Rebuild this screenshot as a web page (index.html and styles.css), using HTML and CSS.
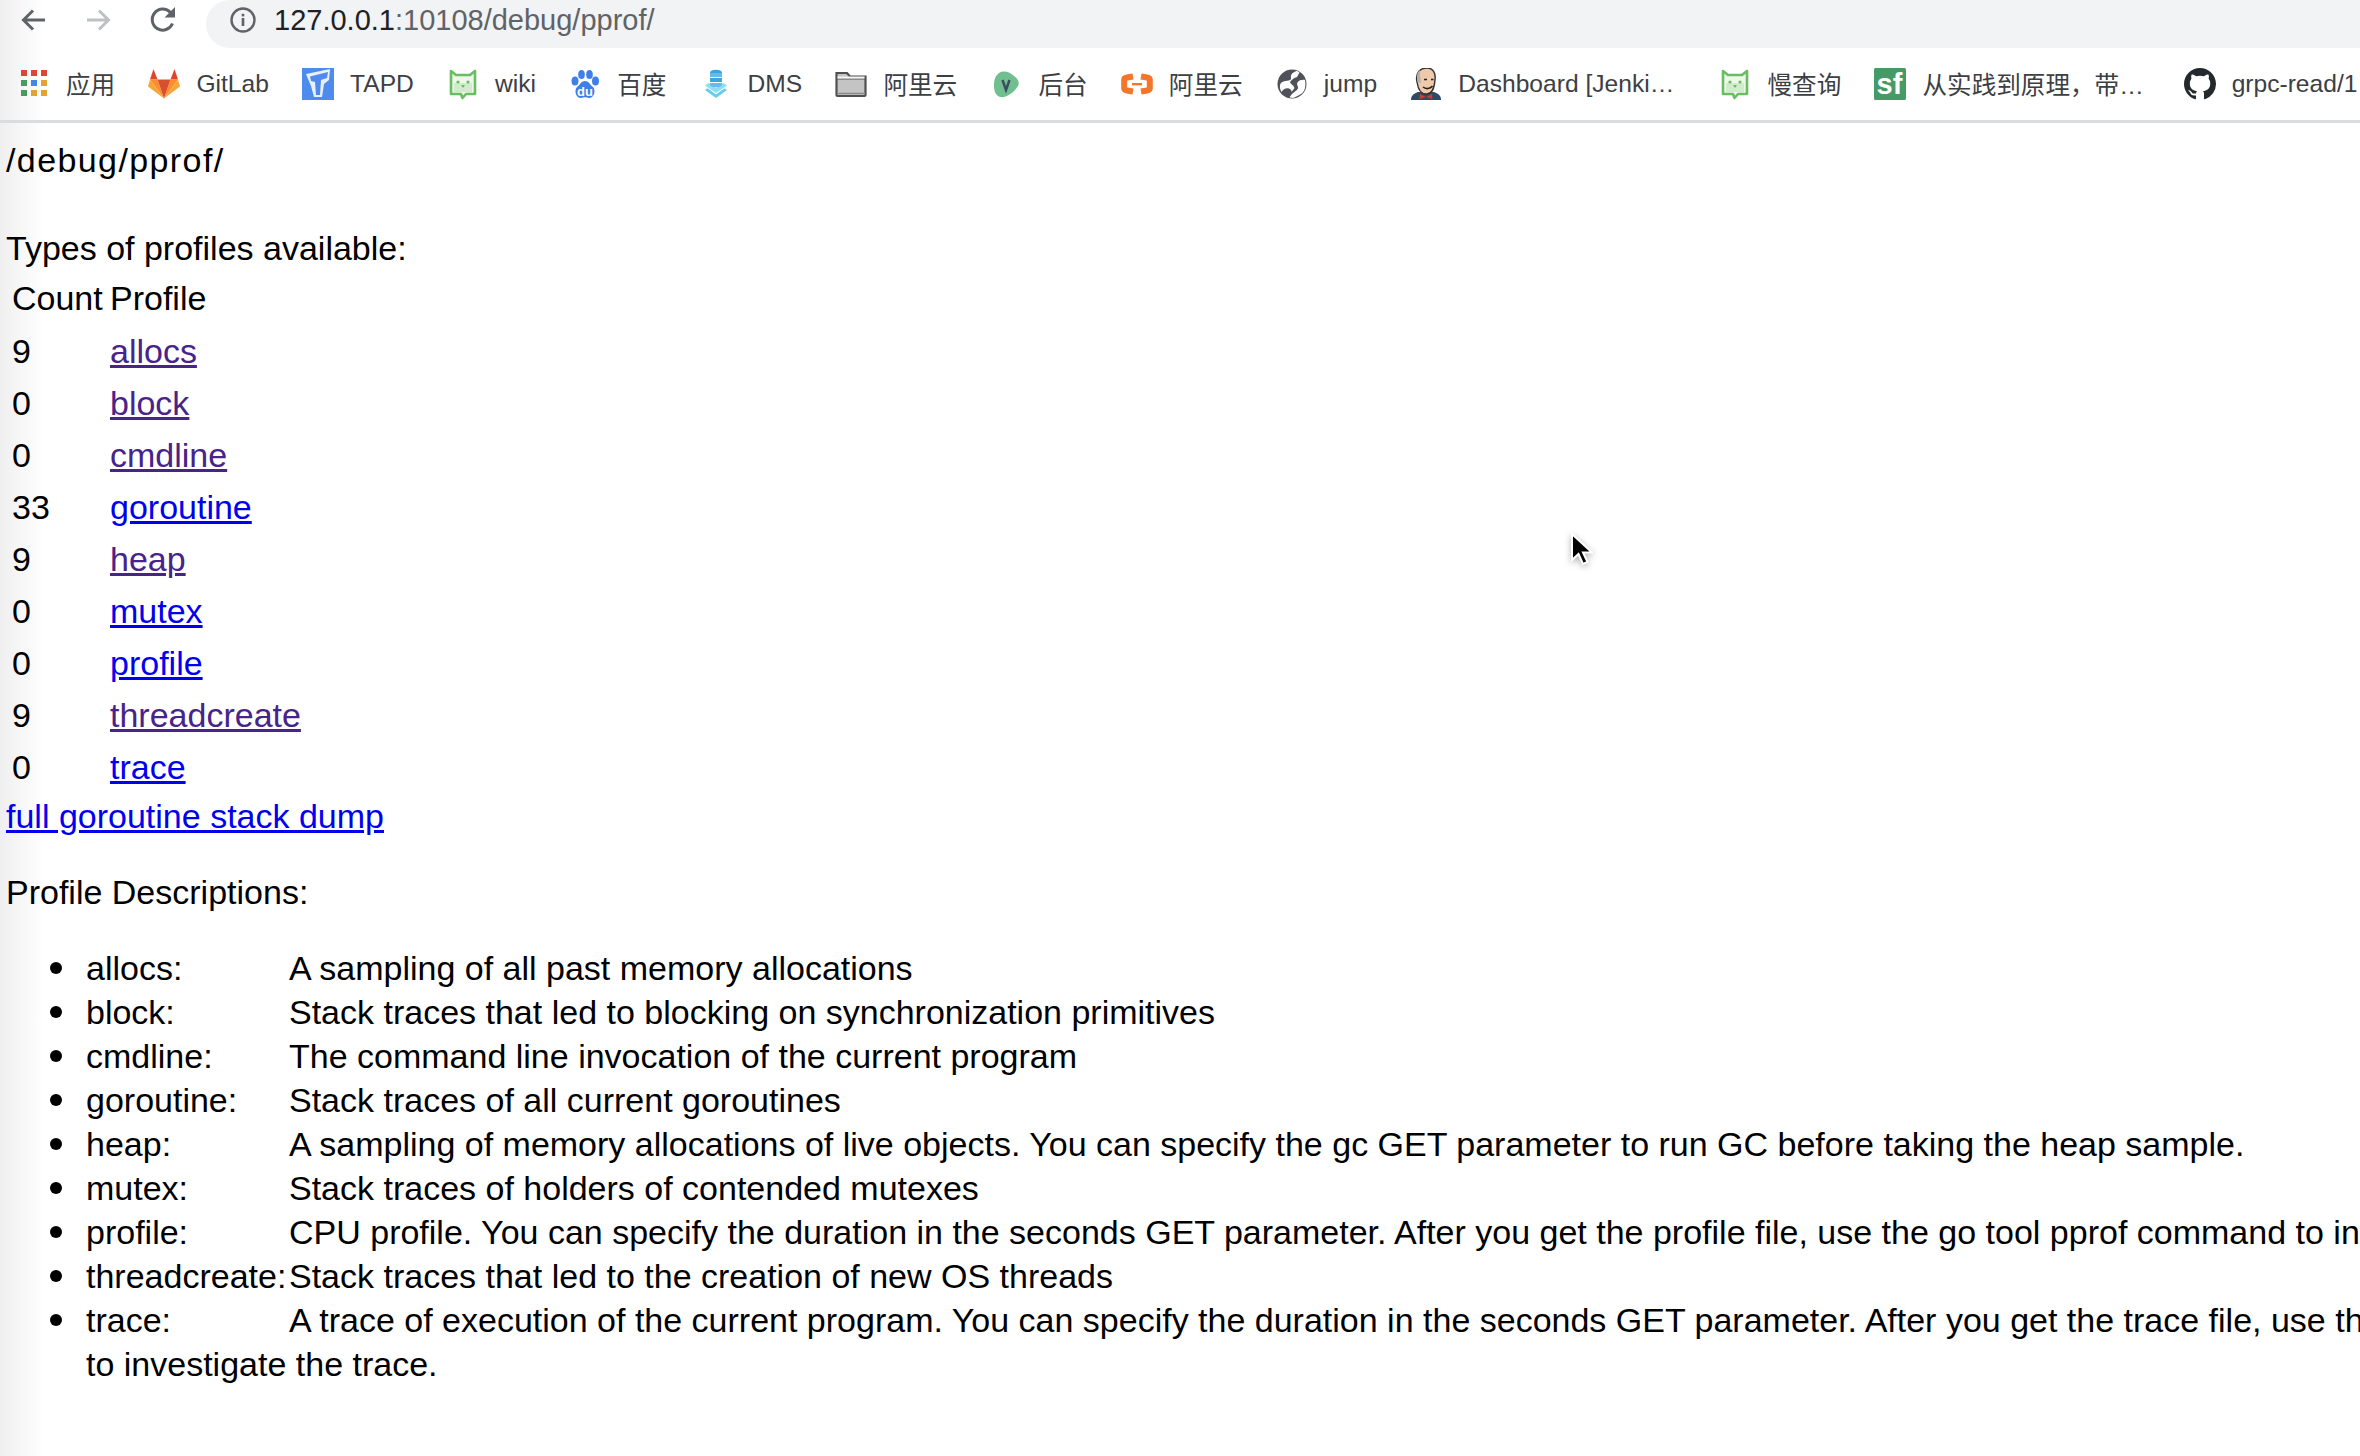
FILE: index.html
```html
<!DOCTYPE html>
<html lang="en">
<head>
    <meta charset="UTF-8">
    <title>/debug/pprof/</title>
    <link rel="stylesheet" href="styles.css">
</head>
<body>
    <div class="toolbar">
        <svg class="nav-icon" viewBox="0 0 28 28"><path d="M25 14H4M13 4.500L3.500 14 13 23.500" fill="none" stroke="#5f6368" stroke-width="3"/></svg>
        <svg class="nav-icon nav-next" viewBox="0 0 28 28"><path d="M3 14h21M15 4.500L24.500 14 15 23.500" fill="none" stroke="#bdc1c6" stroke-width="3"/></svg>
        <svg class="nav-icon nav-reload" viewBox="0 0 28 28"><path d="M23.500 17.500A10.500 10.500 0 1 1 21.500 6.500" fill="none" stroke="#5f6368" stroke-width="3"/><path d="M26 1v10.500H15.500z" fill="#5f6368"/></svg>
        <div class="address">
            <svg class="info-icon" viewBox="0 0 26 26"><circle cx="13" cy="13" r="11.500" fill="none" stroke="#5f6368" stroke-width="2.400"/><rect x="11.700" y="11" width="2.600" height="8" fill="#5f6368"/><rect x="11.700" y="6.800" width="2.600" height="2.600" fill="#5f6368"/></svg>
            <span class="host">127.0.0.1</span><span class="path">:10108/debug/pprof/</span>
        </div>
    </div>

    <div class="bookmarks">
        <div class="bookmark">
            <svg class="bm-icon" viewBox="0 0 32 32">
                <rect x="3" y="2" width="6" height="6" fill="#de4438"/><rect x="13" y="2" width="6" height="6" fill="#de4438"/><rect x="23" y="2" width="6" height="6" fill="#de4438"/>
                <rect x="3" y="12" width="6" height="6" fill="#4b9a5d"/><rect x="13" y="12" width="6" height="6" fill="#3f8ae8"/><rect x="23" y="12" width="6" height="6" fill="#e5a232"/>
                <rect x="3" y="22" width="6" height="6" fill="#4b9a5d"/><rect x="13" y="22" width="6" height="6" fill="#e5a232"/><rect x="23" y="22" width="6" height="6" fill="#e5a232"/>
            </svg>
            <span class="cjk">应用</span>
        </div>
        <div class="bookmark">
            <svg class="bm-icon" viewBox="0 0 32 32">
                <path d="M5.500 1L9.500 11.500H2z" fill="#e24329"/><path d="M26.500 1L22.500 11.500H30z" fill="#e24329"/>
                <path d="M2 11.500h7.500L16 30.500z" fill="#fc8d2f"/><path d="M30 11.500h-7.500L16 30.500z" fill="#fc8d2f"/>
                <path d="M9.500 11.500h13L16 30.500z" fill="#d9502e"/>
                <path d="M2 11.500L0 18.500 16 30.500z" fill="#f6a637"/><path d="M30 11.500l2 7L16 30.500z" fill="#f6a637"/>
            </svg>
            <span>GitLab</span>
        </div>
        <div class="bookmark">
            <svg class="bm-icon" viewBox="0 0 32 32">
                <rect width="32" height="32" fill="#4f8bec"/>
                <path d="M4 6L28 1l-1 11-5 4-2 13h-8L9 18z" fill="#e8f0fd"/>
                <path d="M8 8.500L26 4l-1 6-6 2-1 15h-4l-1-13-4-1z" fill="#4f8bec"/>
            </svg>
            <span>TAPD</span>
        </div>
        <div class="bookmark">
            <svg class="bm-icon" viewBox="0 0 32 32"><use href="#cat"/></svg>
            <span>wiki</span>
        </div>
        <div class="bookmark">
            <svg class="bm-icon" viewBox="0 0 32 32">
                <ellipse cx="6" cy="13" rx="3.500" ry="4.600" fill="#3f7fe8"/><ellipse cx="12.500" cy="6.500" rx="3.300" ry="4.600" fill="#3f7fe8"/><ellipse cx="20.500" cy="6.500" rx="3.300" ry="4.600" fill="#3f7fe8"/><ellipse cx="26.500" cy="13" rx="3.500" ry="4.600" fill="#3f7fe8"/>
                <path d="M16 13c4 0 5 4 8 6 3 3 1.500 11-4 11-1.500 0-2.500-.7-4-.7s-2.500.7-4 .7c-5.500 0-7-8-4-11 3-2 4-6 8-6z" fill="#3f7fe8"/>
                <text x="16" y="27.500" class="bm-du">du</text>
            </svg>
            <span class="cjk">百度</span>
        </div>
        <div class="bookmark">
            <svg class="bm-icon" viewBox="0 0 32 32">
                <path d="M16 30L5 22l2.500-1.800L16 26.500l8.500-6.300L27 22z" fill="#62cdf0"/>
                <path d="M16 25L5 17.500 8.500 15 16 20l7.500-5 3.500 2.500z" fill="#8fddf5"/>
                <ellipse cx="16" cy="4.500" rx="6" ry="2.800" fill="#3aa6dd"/>
                <rect x="10" y="5" width="12" height="4" fill="#62bce8"/><rect x="10" y="10" width="12" height="4" fill="#3aa6dd"/>
                <path d="M10 15h12v1.500c0 1.500-2.700 2.800-6 2.800s-6-1.300-6-2.800z" fill="#62bce8"/>
            </svg>
            <span>DMS</span>
        </div>
        <div class="bookmark">
            <svg class="bm-icon" viewBox="0 0 32 32">
                <path d="M1.500 5H12l3 3.500h15.500V27a1 1 0 0 1-1 1h-27a1 1 0 0 1-1-1z" fill="#c4c4c4" stroke="#505050" stroke-width="2.200"/>
                <path d="M2 11h28" stroke="#505050" stroke-width="1"/>
                <path d="M2.500 9.500h27" stroke="#f4f4f4" stroke-width="2"/>
                <path d="M2 25.500h28" stroke="#8a8a8a" stroke-width="1.500"/>
            </svg>
            <span class="cjk">阿里云</span>
        </div>
        <div class="bookmark">
            <svg class="bm-icon" viewBox="0 0 32 32">
                <path d="M9 5c5-3 11-1 15 3 4 3 6 6 4 10-3 5-8 9-14 11-6 1-10-3-10-11 0-6 1-10 5-13z" fill="#6fbf8f"/>
                <path d="M12.500 12l3.500 10 3.500-10" fill="none" stroke="#3d4a63" stroke-width="2.400"/>
            </svg>
            <span class="cjk">后台</span>
        </div>
        <div class="bookmark">
            <svg class="bm-icon" viewBox="0 0 32 32">
                <path d="M12 8.500L6 9.500c-1.300.3-2.800 1-2.800 2v9c0 1 1.500 1.700 2.800 2l6 1M20 8.500l6 1c1.300.3 2.800 1 2.800 2v9c0 1-1.500 1.700-2.800 2l-6 1" fill="none" stroke="#f4762a" stroke-width="6"/>
                <rect x="11" y="15" width="10" height="2.400" fill="#f4762a"/>
            </svg>
            <span class="cjk">阿里云</span>
        </div>
        <div class="bookmark">
            <svg class="bm-icon" viewBox="0 0 32 32">
                <circle cx="16" cy="16" r="14.500" fill="#50525a"/>
                <path d="M21 2.800c-5 1.700-6.500 4.200-6 7.200.4 2-1.500 2.500-4 2.800-4 .5-6.500 1.700-7 4.200-.5 2.700.5 5.200 1.500 7 1.500-2.500 4.500-4.500 7.500-3.500 2 .7 2.800 2 2.500 3.500l3-4c-1-3-4-4-4.500-6 2-2 3-4 7-5l2.500-4.500z" fill="#fff"/>
                <path d="M29 12c-3-.5-6 .3-7.500 2.300-1.200 2 .5 3.500.5 5.500 0 3-5 4-8.500 9.500 1 .5 3 .7 4.500.5 4-2.500 8-3 10-7 1.500-3 1.700-7 1-10.800z" fill="#fff"/>
            </svg>
            <span>jump</span>
        </div>
        <div class="bookmark">
            <svg class="bm-icon" viewBox="0 0 32 32">
                <path d="M1 32c0-4 2-6 7-8h16c5 2 7 4 7 8z" fill="#2f4a63"/>
                <path d="M7 14C5 5 10 0 17 0c6 0 9 5 8 12-.5 6-1.500 13-8 14-6 .5-9-5-10-12z" fill="#eec9ab" stroke="#33302e" stroke-width="1.400"/>
                <path d="M7.500 14C6 6 8 3 10.500 2c-1 4 0 8 .5 13z" fill="#b5b0a8"/>
                <path d="M14 11.500h3M21 11.500h2.500M13 19c3 2.500 7 2 9.500-1" fill="none" stroke="#2a1f18" stroke-width="1.600"/>
                <path d="M10 26l6 3 6-3 .5 5-6.500-2-6.500 2z" fill="#d33833"/>
            </svg>
            <span class="clipped">Dashboard [Jenki…</span>
        </div>
        <div class="bookmark">
            <svg class="bm-icon" viewBox="0 0 32 32"><use href="#cat"/></svg>
            <span class="cjk">慢查询</span>
        </div>
        <div class="bookmark">
            <svg class="bm-icon" viewBox="0 0 32 32">
                <rect width="32" height="32" rx="1.500" fill="#459a65"/>
                <text x="15.500" y="26" class="bm-sf">sf</text>
            </svg>
            <span class="cjk clipped">从实践到原理，带…</span>
        </div>
        <div class="bookmark">
            <svg class="bm-icon" viewBox="0 0 16 16">
                <path d="M8 0C3.580 0 0 3.580 0 8c0 3.540 2.290 6.530 5.470 7.590.4.070.55-.17.55-.38 0-.19-.01-.82-.01-1.490-2.010.37-2.530-.49-2.690-.94-.09-.23-.48-.94-.82-1.130-.28-.15-.68-.52-.01-.53.630-.01 1.080.58 1.230.82.720 1.210 1.870.87 2.330.66.070-.52.280-.87.510-1.070-1.780-.2-3.640-.89-3.640-3.950 0-.87.310-1.590.82-2.150-.08-.2-.36-1.020.08-2.120 0 0 .67-.21 2.200.82.640-.18 1.320-.27 2-.27s1.360.09 2 .27c1.530-1.040 2.200-.82 2.200-.82.44 1.100.16 1.920.08 2.120.51.56.82 1.270.82 2.150 0 3.070-1.870 3.750-3.650 3.950.29.25.54.73.54 1.480 0 1.070-.01 1.930-.01 2.200 0 .21.15.46.55.38A8.010 8.010 0 0 0 16 8c0-4.420-3.580-8-8-8z" fill="#24292e"/>
            </svg>
            <span>grpc-read/1…</span>
        </div>
    </div>

    <svg class="defs" width="0" height="0">
        <symbol id="cat" viewBox="0 0 32 32">
            <path d="M4 3l5 4h14l5-4v23H19l-3.500 4-1.500-4H4z" fill="#eef7ea" stroke="#69bd62" stroke-width="2.600" stroke-linejoin="round"/>
            <rect x="7" y="15" width="18" height="9" fill="#d3ebcd"/>
            <circle cx="11" cy="14" r="1.600" fill="#69bd62"/><circle cx="21" cy="14" r="1.600" fill="#69bd62"/>
            <path d="M14 17h4l-2 3z" fill="#69bd62"/>
        </symbol>
    </svg>

    <div class="page">
        <div class="title">/debug/pprof/</div>
        <p class="section types">Types of profiles available:</p>
        <table class="profiles">
            <tr><th>Count</th><th>Profile</th></tr>
            <tr><td>9</td><td><a class="seen" href="#allocs">allocs</a></td></tr>
            <tr><td>0</td><td><a class="seen" href="#block">block</a></td></tr>
            <tr><td>0</td><td><a class="seen" href="#cmdline">cmdline</a></td></tr>
            <tr><td>33</td><td><a href="#goroutine">goroutine</a></td></tr>
            <tr><td>9</td><td><a class="seen" href="#heap">heap</a></td></tr>
            <tr><td>0</td><td><a href="#mutex">mutex</a></td></tr>
            <tr><td>0</td><td><a href="#profile">profile</a></td></tr>
            <tr><td>9</td><td><a class="seen" href="#threadcreate">threadcreate</a></td></tr>
            <tr><td>0</td><td><a href="#trace">trace</a></td></tr>
        </table>
        <a class="dump" href="#full">full goroutine stack dump</a>
        <p class="section descriptions">Profile Descriptions:</p>
        <ul class="desc-list">
            <li><span class="profile-name">allocs:</span>A sampling of all past memory allocations</li>
            <li><span class="profile-name">block:</span>Stack traces that led to blocking on synchronization primitives</li>
            <li><span class="profile-name">cmdline:</span>The command line invocation of the current program</li>
            <li><span class="profile-name">goroutine:</span>Stack traces of all current goroutines</li>
            <li><span class="profile-name">heap:</span>A sampling of memory allocations of live objects. You can specify the gc GET parameter to run GC before taking the heap sample.</li>
            <li><span class="profile-name">mutex:</span>Stack traces of holders of contended mutexes</li>
            <li><span class="profile-name">profile:</span>CPU profile. You can specify the duration in the seconds GET parameter. After you get the profile file, use the go tool pprof command to investigate the profile.</li>
            <li><span class="profile-name">threadcreate:</span>Stack traces that led to the creation of new OS threads</li>
            <li><span class="profile-name">trace:</span>A trace of execution of the current program. You can specify the duration in the seconds GET parameter. After you get the trace file, use the go tool trace command<br>to investigate the trace.</li>
        </ul>
    </div>

    <svg class="cursor" viewBox="0 0 24 36"><path d="M3 2v26l6.500-6 4.500 10 4.500-2-4.500-9.500H23z" fill="#000" stroke="#fff" stroke-width="2"/></svg>
</body>
</html>
```

FILE: styles.css
```css
* { margin: 0; padding: 0; box-sizing: border-box; }
html, body {
    width: 2360px;
    height: 1456px;
    overflow: hidden;
}
body {
    position: relative;
    font-family: "Liberation Sans", Arial, sans-serif;
    font-size: 34px;
    color: #000;
    background: linear-gradient(to right, #efefef, #fff 44px);
}
.defs { position: absolute; }

/* browser chrome */
.toolbar {
    display: flex;
    align-items: flex-start;
    height: 48px;
    padding-left: 20px;
}
.nav-icon {
    width: 28px;
    height: 28px;
    margin-top: 6px;
    flex: none;
}
.nav-next { margin-left: 36px; }
.nav-reload { margin-left: 37px; }
.address {
    display: flex;
    align-items: center;
    flex: 1;
    height: 48px;
    margin-left: 29px;
    padding: 0 0 8px 24px;
    background-color: #f1f3f4;
    border-radius: 24px 0 0 24px;
    font-size: 29px;
}
.info-icon {
    width: 26px;
    height: 26px;
    margin-right: 18px;
    flex: none;
}
.host { color: #202124; }
.path { color: #5f6368; }

.bookmarks {
    display: flex;
    align-items: center;
    gap: 33.2px;
    height: 75px;
    padding-left: 18px;
    border-bottom: 3px solid #dadce0;
    font-family: "Liberation Sans", "Noto Sans CJK SC", sans-serif;
    font-size: 24.6px;
    color: #3c4043;
    white-space: nowrap;
    overflow: hidden;
}
.bookmark {
    display: flex;
    align-items: center;
    gap: 16px;
    flex: none;
}
.bookmark .cjk { margin-top: -3px; }
.bookmark .clipped { width: 228px; }
.bm-icon {
    width: 32px;
    height: 32px;
    flex: none;
}
.bm-du {
    font-family: "Liberation Sans", sans-serif;
    font-size: 13px;
    font-weight: bold;
    fill: #fff;
    text-anchor: middle;
}
.bm-sf {
    font-family: "Liberation Sans", sans-serif;
    font-size: 29px;
    font-weight: bold;
    fill: #fff;
    text-anchor: middle;
}

/* page content */
.page {
    padding-left: 6px;
    white-space: nowrap;
}
.title {
    margin-top: 16px;
    line-height: 42px;
    letter-spacing: 1.4px;
}
.section { line-height: 42px; }
.types { margin-top: 46px; }
.profiles {
    border-collapse: collapse;
    margin-top: 8px;
}
.profiles th {
    font-weight: normal;
    text-align: left;
    padding: 2px 0 8px 6px;
    line-height: 38px;
}
.profiles td {
    padding: 7px 0 7px 6px;
    line-height: 38px;
}
.profiles tr > :first-child { width: 104px; }
.profiles tr > :last-child { padding-left: 0; }
.page a { color: #0000ee; }
.page a.seen { color: #47238a; }
.dump {
    display: block;
    margin-top: 4px;
    line-height: 38px;
}
.descriptions { margin-top: 36px; }
.desc-list {
    margin-top: 33px;
    padding-left: 80px;
    list-style: none;
}
.desc-list li {
    position: relative;
    line-height: 44px;
}
.desc-list li::before {
    content: '';
    position: absolute;
    left: -36px;
    top: 16px;
    width: 12px;
    height: 12px;
    border-radius: 50%;
    background-color: #000;
}
.profile-name {
    display: inline-block;
    width: 203px;
}

.cursor {
    position: absolute;
    left: 1569px;
    top: 532px;
    width: 24px;
    height: 36px;
    filter: drop-shadow(0 2px 3px rgba(0,0,0,0.3));
}
```
